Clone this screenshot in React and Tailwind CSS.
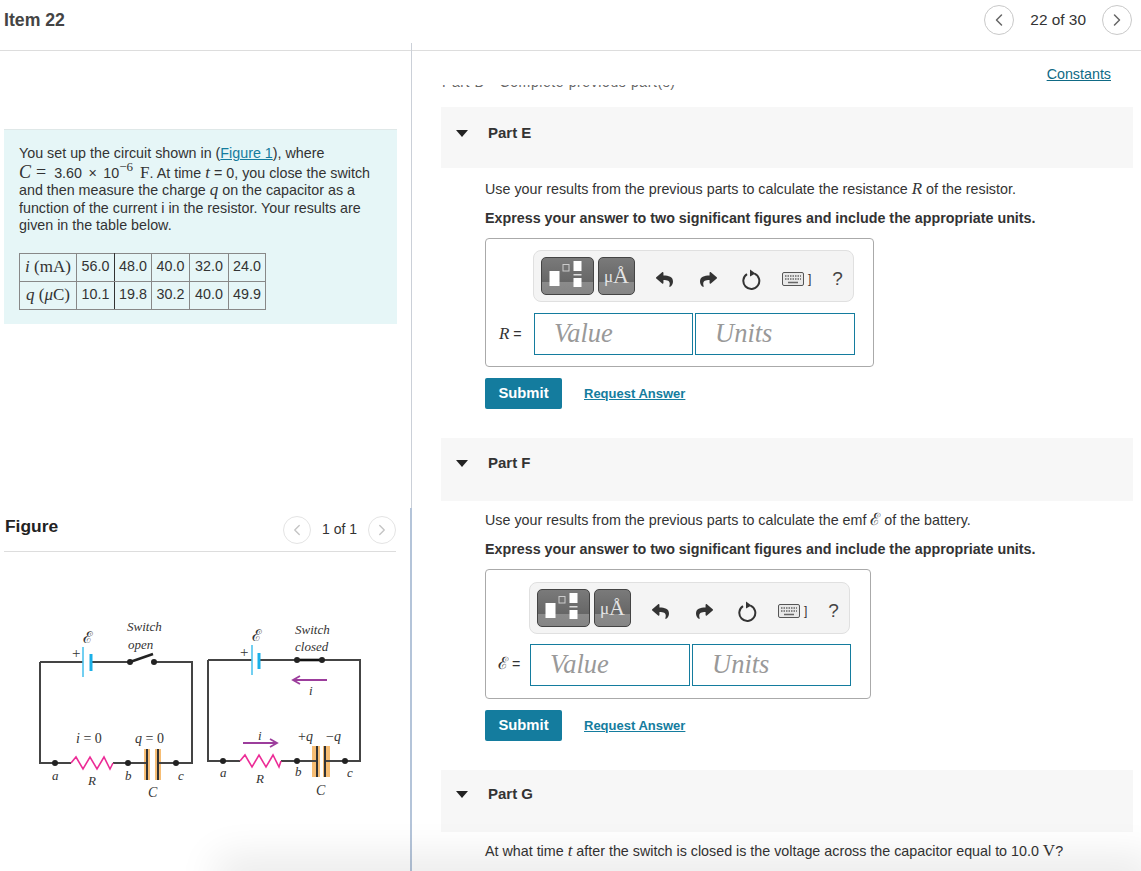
import { FaReply, FaShare } from 'react-icons/fa';
import { ChevronLeft, ChevronRight } from 'lucide-react';

const mathFont = "font-['Liberation_Serif',serif]";
const scriptE = "font-['DejaVu_Serif',serif] not-italic text-[17px] leading-none";

function Pager({ label, faded, small }) {
  const size = small ? 'w-[28px] h-[28px]' : 'w-[30px] h-[30px]';
  const line = faded ? 'border-[#e4e4e4] text-[#c4c4c4]' : 'border-[#c9c9c9] text-[#666]';
  return (
    <div className={`flex items-center ${small ? 'gap-[11px]' : 'gap-[16px]'}`}>
      <button className={`${size} ${line} rounded-full border flex items-center justify-center`}>
        <ChevronLeft size={small ? 18 : 20} strokeWidth={1.8} />
      </button>
      <span className={`${small ? 'text-[14px]' : 'text-[15.4px]'} text-[#333]`}>{label}</span>
      <button className={`${size} ${line} rounded-full border flex items-center justify-center`}>
        <ChevronRight size={small ? 18 : 20} strokeWidth={1.8} />
      </button>
    </div>
  );
}

function Circuit() {
  return (
    <svg width="370" height="200" viewBox="20 610 370 200" className="block ml-[20px] mt-[58px]">
      <g fontFamily="'Liberation Serif', serif" fontStyle="italic" fill="#333">
        {/* left circuit, switch open */}
        <rect x="144" y="749" width="6" height="31" fill="#f6bd74" />
        <rect x="155" y="749" width="6" height="31" fill="#f6bd74" />
        <path d="M40 662H83M91 662H130M154 662H192V763H158M147 763H113M71 763H40V662" fill="none" stroke="#444" strokeWidth="2" />
        <path d="M147 749V780M158 749V780" stroke="#333" strokeWidth="2" />
        <path d="M83 647V677" stroke="#4fc3ee" strokeWidth="1.6" />
        <path d="M91 654V671" stroke="#1bb0e8" strokeWidth="3" />
        <path d="M130 662L153 654" stroke="#222" strokeWidth="2.6" />
        <path d="M71 763L76 757L83 769L90 757L97 769L104 757L110 769L113 763" fill="none" stroke="#ec2d97" strokeWidth="1.6" />
        <g fill="#222">
          <circle cx="130" cy="662" r="3" />
          <circle cx="154" cy="662" r="3" />
          <circle cx="55" cy="763" r="3" />
          <circle cx="128" cy="763" r="3" />
          <circle cx="176" cy="763" r="3" />
        </g>
        <text x="72" y="658" fontSize="15" fontStyle="normal">+</text>
        <text x="83" y="643" fontSize="16" fontStyle="normal" fontFamily="'DejaVu Serif', serif">ℰ</text>
        <text x="127" y="631" fontSize="13">Switch</text>
        <text x="128" y="649" fontSize="13">open</text>
        <text x="76" y="743" fontSize="14">i<tspan fontStyle="normal"> = 0</tspan></text>
        <text x="135" y="743" fontSize="14">q<tspan fontStyle="normal"> = 0</tspan></text>
        <text x="52" y="780" fontSize="13">a</text>
        <text x="125" y="780" fontSize="13">b</text>
        <text x="178" y="780" fontSize="13">c</text>
        <text x="88" y="785" fontSize="13">R</text>
        <text x="148" y="797" fontSize="14">C</text>

        {/* right circuit, switch closed */}
        <rect x="312" y="746" width="8" height="31" fill="#f6bd74" />
        <rect x="323" y="746" width="7" height="31" fill="#f6bd74" />
        <path d="M208 660H252M259 660H297M322 660H360V761H325M317 761H281M240 761H208V660" fill="none" stroke="#444" strokeWidth="2" />
        <path d="M317 746V777M325 746V777" stroke="#333" strokeWidth="2" />
        <path d="M252 645V675" stroke="#4fc3ee" strokeWidth="1.6" />
        <path d="M259 653V669" stroke="#1bb0e8" strokeWidth="3" />
        <path d="M297 660H322" stroke="#111" strokeWidth="2.6" />
        <path d="M240 761L245 755L252 767L259 755L266 767L273 755L279 767L281 761" fill="none" stroke="#ec2d97" strokeWidth="1.6" />
        <path d="M327 680H294M300 676L293 680L300 684" fill="none" stroke="#9c3d9c" strokeWidth="1.8" />
        <path d="M243 743H276M270 739L277 743L270 747" fill="none" stroke="#9c3d9c" strokeWidth="1.8" />
        <g fill="#222">
          <circle cx="297" cy="660" r="3" />
          <circle cx="322" cy="660" r="3" />
          <circle cx="223" cy="761" r="3" />
          <circle cx="297" cy="761" r="3" />
          <circle cx="345" cy="761" r="3" />
        </g>
        <text x="240" y="657" fontSize="15" fontStyle="normal">+</text>
        <text x="252" y="641" fontSize="16" fontStyle="normal" fontFamily="'DejaVu Serif', serif">ℰ</text>
        <text x="295" y="634" fontSize="13">Switch</text>
        <text x="295" y="651" fontSize="13">closed</text>
        <text x="309" y="695" fontSize="13">i</text>
        <text x="258" y="740" fontSize="13">i</text>
        <text x="298" y="741" fontSize="14"><tspan fontStyle="normal">+</tspan>q</text>
        <text x="326" y="741" fontSize="14"><tspan fontStyle="normal">−</tspan>q</text>
        <text x="220" y="777" fontSize="13">a</text>
        <text x="295" y="776" fontSize="13">b</text>
        <text x="347" y="777" fontSize="13">c</text>
        <text x="256" y="783" fontSize="13">R</text>
        <text x="316" y="795" fontSize="14">C</text>
      </g>
    </svg>
  );
}

function DataTable() {
  const rows = [
    { head: <><i>i</i> (mA)</>, cells: ['56.0', '48.0', '40.0', '32.0', '24.0'] },
    { head: <><i>q</i> (<i>μ</i>C)</>, cells: ['10.1', '19.8', '30.2', '40.0', '49.9'] },
  ];
  return (
    <table className="border-collapse mt-[18px] text-[14.3px] text-[#333] table-fixed w-[246px]">
      <colgroup>
        <col className="w-[57px]" />
        <col className="w-[38px]" />
        <col className="w-[37px]" />
        <col className="w-[38px]" />
        <col className="w-[39px]" />
        <col className="w-[37px]" />
      </colgroup>
      <tbody>
        {rows.map((row, r) => (
          <tr key={r} className="h-[28px]">
            <td className={`border border-[#888] text-center p-0 text-[17px] ${mathFont}`}>{row.head}</td>
            {row.cells.map((c, i) => (
              <td key={i} className={`border border-[#888] text-center p-0 ${i === 0 ? 'border-r-[#333]' : ''}`}>{c}</td>
            ))}
          </tr>
        ))}
      </tbody>
    </table>
  );
}

function TemplateIcon() {
  return (
    <svg width="40" height="30" viewBox="0 0 40 30">
      <rect x="1.5" y="10" width="10" height="15" fill="#fff" />
      <rect x="15" y="3.5" width="6" height="6.5" fill="none" stroke="#ccc" strokeWidth="1" />
      <rect x="25.5" y="0" width="8" height="10" fill="#fff" />
      <rect x="25.5" y="13" width="8" height="1.5" fill="#ddd" />
      <rect x="25.5" y="17" width="8" height="9" fill="#fff" />
    </svg>
  );
}

function Toolbar({ className }) {
  const grey = 'h-[38px] rounded-[5px] border border-[#444] bg-[linear-gradient(#7a7a7a_0%,#666_68%,#8b8b8b_68%,#858585_100%)] flex items-center justify-center';
  return (
    <div className={`w-[321px] h-[52px] rounded-[8px] border border-[#e0e0e0] bg-[#f4f4f4] flex items-center pl-[7px] ${className}`}>
      <div className={`${grey} w-[53px]`}><TemplateIcon /></div>
      <div className={`${grey} w-[37px] ml-[4px] text-[#e4e4e4] ${mathFont} text-[17px] leading-none`}>μ<span className="text-[22px]">Å</span></div>
      <FaReply size={17} className="ml-[21px] mt-[6px] text-[#333]" />
      <FaShare size={17} className="ml-[27px] mt-[6px] text-[#333]" />
      <svg width="20" height="22" viewBox="0 0 20 22" className="ml-[24px] mt-[6px] text-[#333]">
        <path d="M6 6.2a8 8 0 1 0 7.5-.6" fill="none" stroke="currentColor" strokeWidth="2" />
        <path d="M9 1.5L14.5 5.5L9 8.5Z" fill="currentColor" />
      </svg>
      <svg width="22" height="14" viewBox="0 0 22 14" className="ml-[21px] mt-[6px]">
        <rect x="0.5" y="0.5" width="21" height="13" rx="1.5" fill="#e8e8e8" stroke="#555" />
        <path d="M3 4H19M3 7H19" stroke="#666" strokeWidth="1.5" strokeDasharray="1.5 1" />
        <path d="M6 10.5H16" stroke="#666" strokeWidth="1.5" />
      </svg>
      <span className="ml-[4px] mt-[6px] text-[12px] text-[#333]">]</span>
      <span className="ml-[21px] mt-[7px] text-[19px] text-[#444]">?</span>
    </div>
  );
}

function AnswerBox({ label, boxClass, labelClass, toolbarClass, firstWidth, secondWidth }) {
  return (
    <div className={`rounded-[4px] border border-[#aaa] ${boxClass}`}>
      <Toolbar className={toolbarClass} />
      <div className="flex items-center">
        <div className={`text-[14.3px] text-[#333] shrink-0 ${labelClass}`}>{label}</div>
        <div className={`h-[42px] border border-[#147c9e] flex items-center pl-[19px] pb-[1px] text-[26.5px] italic text-[#999] ${mathFont} ${firstWidth}`}>Value</div>
        <div className={`h-[42px] ml-[2px] border border-[#147c9e] flex items-center pl-[19px] pb-[1px] text-[26.5px] italic text-[#999] ${mathFont} ${secondWidth}`}>Units</div>
      </div>
    </div>
  );
}

function Actions() {
  return (
    <div className="flex items-center">
      <button className="w-[77px] h-[31px] rounded-[2px] bg-[#147c9e] text-white text-[14.8px] font-bold">Submit</button>
      <a className="ml-[22px] text-[13px] font-bold text-[#147c9e] underline">Request Answer</a>
    </div>
  );
}

function PartHeader({ title, heightClass }) {
  return (
    <div className={`ml-[29px] mr-[8px] bg-[#f7f7f7] flex items-center pl-[15px] ${heightClass}`}>
      <svg width="12" height="7" viewBox="0 0 12 7"><path d="M0 0H12L6 7Z" fill="#222" /></svg>
      <span className="ml-[20px] text-[15px] font-bold text-[#333]">{title}</span>
    </div>
  );
}

export default function App() {
  return (
    <div className="relative w-[1141px] h-[871px] overflow-hidden bg-white font-['Liberation_Sans',sans-serif] text-[#333]">
      {/* Header */}
      <div className="h-[51px] border-b border-[#ddd] flex items-center justify-between pl-[4px] pr-[9px] pb-[10px]">
        <h1 className="text-[17.7px] font-bold text-[#444]">Item 22</h1>
        <Pager label="22 of 30" />
      </div>
      <div className="absolute left-[411px] top-[43px] h-[8px] w-px bg-[#cbd0d8]" />

      <div className="flex h-[820px]">
        {/* Left column */}
        <div className="w-[412px] shrink-0 flex flex-col">
          <div className="h-[457px] border-r border-[#cbd0d8] pt-[78px]">
            <div className="ml-[4px] w-[393px] h-[195px] bg-[#e6f6f7] border-t border-[#dfe8e8] pt-[15px] pl-[15px] text-[14.3px] leading-[17.5px] text-[#333]">
              <p>
                <span className="block">You set up the circuit shown in (<a className="text-[#147c9e] underline">Figure 1</a>), where</span>
                <span className="block mt-[1px] -mb-[1px] whitespace-nowrap">
                  <i className={`${mathFont} text-[18px] mr-[5px]`}>C</i>
                  <span className={`${mathFont} text-[18px] mr-[8px]`}>=</span>3.60<span className="mx-[6.5px]">×</span>10<sup className={`${mathFont} text-[13px]`}>−6</sup><span className={`${mathFont} text-[17px] ml-[7px]`}>F</span>. At time <i className={`${mathFont} text-[17px]`}>t</i> = 0, you close the switch
                </span>
                <span className="block">and then measure the charge <i className={`${mathFont} text-[17px]`}>q</i> on the capacitor as a</span>
                <span className="block">function of the current i in the resistor. Your results are</span>
                <span className="block">given in the table below.</span>
              </p>
              <DataTable />
            </div>
          </div>
          <div className="flex-1 border-r-2 border-[#b4c4d9] pr-px">
            <div className="ml-[4px] w-[392px] h-[44px] border-b border-[#ddd] flex items-center justify-between">
              <h2 className="ml-px mb-[7px] text-[17.4px] font-bold text-[#222]">Figure</h2>
              <Pager label="1 of 1" faded small />
            </div>
            <Circuit />
          </div>
        </div>

        {/* Right column */}
        <div className="flex-1 min-w-0">
          <div className="h-[34px] flex items-start justify-end pr-[30px] pt-[13px]">
            <a className="text-[14.3px] text-[#0f6a85] underline">Constants</a>
          </div>
          <div className="h-[5px] overflow-hidden flex items-end pl-[30px] mb-[17px]">
            <span className="text-[14px] leading-[16px] text-[#666] whitespace-nowrap tracking-[0.6px]">Part D - Complete previous part(s)</span>
          </div>

          <PartHeader title="Part E" heightClass="h-[61px] pb-[8px]" />
          <div className="pl-[73px]">
            <p className="mt-[12px] text-[14.3px] leading-[18px]">Use your results from the previous parts to calculate the resistance <i className={`${mathFont} text-[17px]`}>R</i> of the resistor.</p>
            <p className="mt-[11px] text-[14.3px] leading-[18px] font-bold">Express your answer to two significant figures and include the appropriate units.</p>
            <div className="mt-[11px] mb-[11px]">
              <AnswerBox
                label={<span className="pl-[13px]"><i className={`${mathFont} text-[17px]`}>R</i> =</span>}
                boxClass="w-[389px] h-[129px] pt-[11px]"
                labelClass="w-[48px]"
                toolbarClass="ml-[47px] mb-[11px]"
                firstWidth="w-[159px]"
                secondWidth="w-[160px]"
              />
            </div>
            <Actions />
          </div>

          <div className="mt-[29px]"><PartHeader title="Part F" heightClass="h-[63px] pb-[12px]" /></div>
          <div className="pl-[73px]">
            <p className="mt-[10px] h-[18px] text-[14.3px] leading-[18px]">Use your results from the previous parts to calculate the emf <span className={scriptE}>ℰ</span> of the battery.</p>
            <p className="mt-[11px] text-[14.3px] leading-[18px] font-bold">Express your answer to two significant figures and include the appropriate units.</p>
            <div className="mt-[11px] mb-[11px]">
              <AnswerBox
                label={<span className="pl-[12px]"><span className={scriptE}>ℰ</span> =</span>}
                boxClass="w-[386px] h-[130px] pt-[12px]"
                labelClass="w-[44px]"
                toolbarClass="ml-[43px] mb-[10px]"
                firstWidth="w-[160px]"
                secondWidth="w-[159px]"
              />
            </div>
            <Actions />
          </div>

          <div className="mt-[29px]"><PartHeader title="Part G" heightClass="h-[62px] pb-[14px]" /></div>
          <p className="pl-[73px] mt-[10px] text-[14.3px] leading-[18px]">At what time <i className={`${mathFont} text-[17px]`}>t</i> after the switch is closed is the voltage across the capacitor equal to 10.0 <span className={`${mathFont} text-[17px]`}>V</span>?</p>
        </div>
      </div>

      {/* soft shadow over the bottom of the page */}
      <div className="absolute left-[230px] right-0 bottom-[-14px] h-[14px] shadow-[0_0_40px_14px_rgba(0,0,0,0.09)]" />
    </div>
  );
}
